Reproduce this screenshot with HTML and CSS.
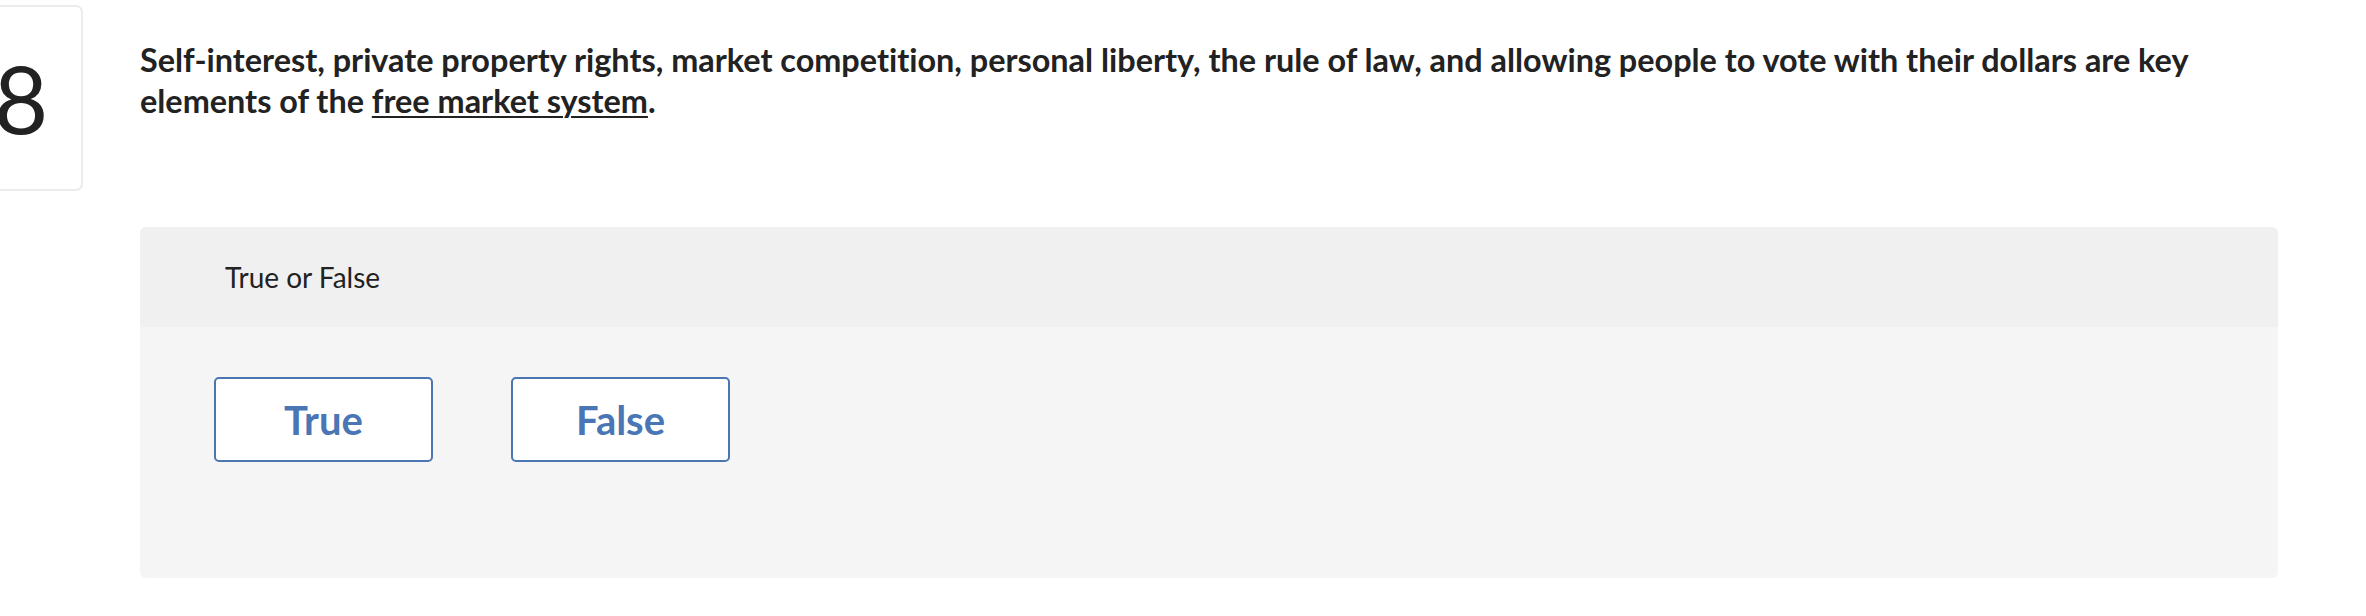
FILE: index.html
```html
<!DOCTYPE html>
<html lang="en">
<head>
<meta charset="utf-8">
<title>Question 8</title>
<link rel="stylesheet" href="styles.css">
</head>
<body>
<div class="question">
  <div class="number-box"><span class="number">8</span></div>
  <div class="content">
    <p class="prompt">Self-interest, private property rights, market competition, personal liberty, the rule of law, and allowing people to vote with their dollars are key elements of the <u class="term">free market system</u>.</p>
    <div class="panel">
      <div class="panel-header">True or False</div>
      <div class="panel-body">
        <button class="choice" type="button">True</button>
        <button class="choice" type="button">False</button>
      </div>
    </div>
  </div>
</div>
</body>
</html>
```

FILE: styles.css
```css
html, body {
  margin: 0;
  padding: 0;
  background: #ffffff;
}

body {
  font-family: "Lato", "Liberation Sans", sans-serif;
  font-variant-ligatures: none;
  color: #222222;
  overflow: hidden;
}

.question {
  display: flex;
  align-items: flex-start;
  gap: 57px;
  width: 2366px;
}

.number-box {
  flex: 0 0 auto;
  box-sizing: border-box;
  width: 128px;
  height: 186px;
  margin-left: -45px;
  margin-top: 5px;
  padding-left: 4px;
  border: 2px solid #ececec;
  border-radius: 7px;
  display: flex;
  align-items: center;
  justify-content: center;
}

.number {
  font-size: 94px;
  font-weight: 400;
  line-height: 1;
  color: #222222;
}

.content {
  flex: 0 0 auto;
  width: 2138px;
  padding-top: 39px;
}

.prompt {
  margin: 0;
  font-size: 32.4px;
  font-weight: 700;
  line-height: 41px;
  color: #222222;
}

.term {
  text-decoration-thickness: 2px;
  text-underline-offset: 3px;
}

.panel {
  margin-top: 106px;
  border-radius: 6px;
  overflow: hidden;
  background: #f5f5f5;
}

.panel-header {
  height: 100px;
  background: #f0f0f0;
  display: flex;
  align-items: center;
  padding-left: 85px;
  font-size: 28px;
  font-weight: 400;
  color: #222222;
}

.panel-body {
  display: flex;
  gap: 78px;
  padding: 50px 0 116px 74px;
}

.choice {
  box-sizing: border-box;
  width: 219px;
  height: 85px;
  margin: 0;
  padding: 0;
  background: #ffffff;
  border: 2px solid #4a76b3;
  border-radius: 5px;
  font-family: "Lato", "Liberation Sans", sans-serif;
  font-size: 40px;
  font-weight: 700;
  color: #4a76b5;
  cursor: pointer;
}
```
